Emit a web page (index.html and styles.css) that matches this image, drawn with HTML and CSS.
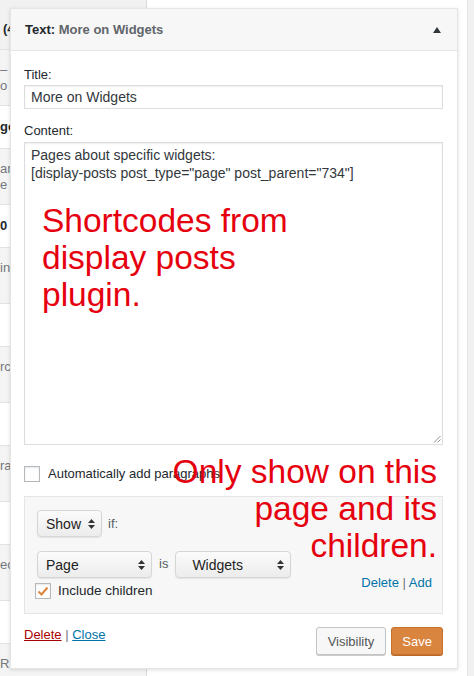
FILE: index.html
```html
<!DOCTYPE html>
<html lang="en">
<head>
    <meta charset="UTF-8">
    <meta name="viewport" content="width=device-width, initial-scale=1.0">
    <title>Widgets</title>
    <link rel="stylesheet" href="styles.css">
</head>
<body>
    <div class="screen">
        <!-- available widgets column (mostly hidden under the open widget) -->
        <div class="widget-list">
            <div class="wl-row wl-first"><b>(4</b></div>
            <div class="wl-row wl-desc">– |<br>o</div>
            <div class="wl-row wl-title"><b>ge</b></div>
            <div class="wl-row wl-desc">ar<br>e</div>
            <div class="wl-row wl-title"><b>0</b></div>
            <div class="wl-row wl-desc">in</div>
            <div class="wl-row wl-title"></div>
            <div class="wl-row wl-desc">rc</div>
            <div class="wl-row wl-title"></div>
            <div class="wl-row wl-desc">ra</div>
            <div class="wl-row wl-title"></div>
            <div class="wl-row wl-desc">ec</div>
            <div class="wl-row wl-title"></div>
            <div class="wl-row wl-desc">RS</div>
        </div>
        <div class="sidebar-area"></div>
        <div class="gutter"></div>

        <!-- the expanded text widget -->
        <div class="widget">
            <div class="widget-top">
                <h3>Text: <span class="in-title">More on Widgets</span></h3>
                <svg class="toggle" width="8" height="6" viewBox="0 0 8 6"><polygon points="4,0 8,6 0,6" fill="#32373c"/></svg>
            </div>

            <div class="widget-inside">
                <label class="field-label">Title:</label>
                <div class="text-input">More on Widgets</div>

                <label class="field-label content-label">Content:</label>
                <div class="content-box">
                    <p>Pages about specific widgets:</p>
                    <p>[display-posts post_type="page" post_parent="734"]</p>
                    <div class="note note-shortcodes">Shortcodes from<br>display posts<br>plugin.</div>
                    <svg class="grip" width="8" height="8" viewBox="0 0 8 8"><path d="M7.5 1 L1 7.5 M7.5 4.5 L4.5 7.5" stroke="#8c8f94" stroke-width="1"/></svg>
                </div>

                <div class="options">
                    <div class="check-row">
                        <span class="checkbox"></span>
                        <span>Automatically add paragraphs</span>
                    </div>

                    <div class="note note-visibility">Only show on this<br>page and its<br>children.</div>

                    <div class="visibility-box">
                        <div class="rule-row">
                            <div class="select select-show">
                                <span>Show</span>
                                <svg width="7" height="12" viewBox="0 0 7 12"><polygon points="3.5,1 7,5 0,5" fill="#333"/><polygon points="0,7 7,7 3.5,11" fill="#333"/></svg>
                            </div>
                            <span class="muted">if:</span>
                        </div>

                        <div class="rule">
                            <div class="rule-main">
                                <div class="rule-row">
                                    <div class="select select-page">
                                        <span>Page</span>
                                        <svg width="7" height="12" viewBox="0 0 7 12"><polygon points="3.5,1 7,5 0,5" fill="#333"/><polygon points="0,7 7,7 3.5,11" fill="#333"/></svg>
                                    </div>
                                    <span class="muted is">is</span>
                                    <div class="select select-widgets">
                                        <span>Widgets</span>
                                        <svg width="7" height="12" viewBox="0 0 7 12"><polygon points="3.5,1 7,5 0,5" fill="#333"/><polygon points="0,7 7,7 3.5,11" fill="#333"/></svg>
                                    </div>
                                </div>
                                <div class="check-row include-row">
                                    <span class="checkbox">
                                        <svg width="14" height="14" viewBox="0 0 14 14"><path d="M2.5 7.5 L5.5 10.5 L11.5 3.5" fill="none" stroke="#dc843b" stroke-width="2"/></svg>
                                    </span>
                                    <span>Include children</span>
                                </div>
                            </div>
                            <div class="rule-links">
                                <a href="#">Delete</a> <span class="sep">|</span> <a href="#">Add</a>
                            </div>
                        </div>
                    </div>
                </div>

                <div class="widget-control">
                    <div class="control-links">
                        <a href="#" class="link-delete">Delete</a> <span class="sep">|</span> <a href="#" class="link-close">Close</a>
                    </div>
                    <div class="control-buttons">
                        <button class="btn">Visibility</button>
                        <button class="btn btn-primary">Save</button>
                    </div>
                </div>
            </div>
        </div>
    </div>
</body>
</html>
```

FILE: styles.css
```css
:root {
    --text: #23282d;
    --text-muted: #555d66;
    --border: #e5e5e5;
    --bg: #f1f1f1;
    --link: #0073aa;
    --red: #e6000e;
}

* {
    margin: 0;
    padding: 0;
    box-sizing: border-box;
}

body {
    width: 474px;
    height: 676px;
    overflow: hidden;
    background-color: var(--bg);
    font-family: "Liberation Sans", Arial, sans-serif;
    color: var(--text);
}

.screen {
    position: relative;
    display: grid;
    grid-template-columns: 147px 321px 1fr;
    height: 676px;
}

/* left column */
.widget-list {
    border-right: 1px solid #dcdcdc;
    overflow: hidden;
}

.wl-row {
    border-bottom: 1px solid #e2e2e2;
    font-size: 13px;
    line-height: 16px;
    color: #72777c;
    white-space: nowrap;
}

.wl-row b {
    color: var(--text);
}

.wl-first {
    height: 50px;
    padding: 21px 0 0 3px;
    background-color: #f1f1f1;
}

.wl-desc {
    height: 56px;
    padding-top: 12px;
    background-color: #f4f4f4;
}

.wl-title {
    height: 43px;
    padding-top: 13px;
    background-color: #fff;
}

.sidebar-area {
    background-color: #fff;
    border-right: 1px solid var(--border);
}

/* open widget */
.widget {
    position: absolute;
    left: 10px;
    top: 8px;
    width: 448px;
    background-color: #fff;
    border: 1px solid var(--border);
    box-shadow: 0 1px 4px rgba(0, 0, 0, 0.13);
}

.widget-top {
    height: 42px;
    display: flex;
    align-items: center;
    justify-content: space-between;
    padding: 0 16px 0 14px;
    background-color: #f7f7f7;
    border-bottom: 1px solid var(--border);
}

.widget-top h3 {
    font-size: 13px;
    font-weight: 700;
    color: var(--text);
}

.in-title {
    color: #60656a;
}

.widget-inside {
    padding: 15px 14px 13px 13px;
}

.field-label {
    display: block;
    font-size: 13px;
    line-height: 18px;
    color: var(--text);
}

.content-label {
    margin-top: 13px;
}

.text-input {
    margin-top: 1px;
    height: 24px;
    padding: 0 6px;
    border: 1px solid #ddd;
    box-shadow: inset 0 1px 2px rgba(0, 0, 0, 0.07);
    font-size: 14px;
    line-height: 22px;
    color: #32373c;
}

.content-box {
    position: relative;
    margin-top: 2px;
    height: 303px;
    padding: 3px 6px;
    border: 1px solid #ddd;
    box-shadow: inset 0 1px 2px rgba(0, 0, 0, 0.07);
    font-size: 14px;
    line-height: 18px;
    color: #32373c;
}

/* red callouts */
.note {
    font-size: 33.5px;
    line-height: 37px;
    color: var(--red);
    white-space: nowrap;
}

.note-shortcodes {
    margin: 20px 0 0 11px;
}

.grip {
    position: absolute;
    right: 1px;
    bottom: 1px;
}

.options {
    position: relative;
    padding-top: 21px;
}

.note-visibility {
    position: absolute;
    top: 8px;
    right: 6px;
    text-align: right;
}

.check-row {
    display: flex;
    align-items: center;
    gap: 8px;
    height: 16px;
    font-size: 13px;
    line-height: 18px;
    color: var(--text);
}

.checkbox {
    width: 16px;
    height: 16px;
    display: flex;
    align-items: center;
    justify-content: center;
    border: 1px solid #b4b9be;
    background-color: #fff;
    box-shadow: inset 0 1px 2px rgba(0, 0, 0, 0.1);
}

.visibility-box {
    margin-top: 14px;
    padding: 13px 10px 14px 12px;
    border: 1px solid var(--border);
    background-color: #f7f7f7;
}

.rule-row {
    display: flex;
    align-items: center;
}

.select {
    height: 27px;
    display: flex;
    align-items: center;
    justify-content: space-between;
    padding: 0 6px 0 8px;
    border: 1px solid #d6d6d6;
    border-radius: 4px;
    background: linear-gradient(#fbfbfb, #ececec);
    box-shadow: 0 1px 1px rgba(0, 0, 0, 0.08);
    font-size: 14px;
    color: #222;
}

.select-show {
    width: 65px;
}

.select-page {
    width: 115px;
}

.select-widgets {
    width: 116px;
    padding-left: 16px;
}

.muted {
    font-size: 13px;
    color: var(--text-muted);
    margin-left: 6px;
}

.is {
    margin: -2px 7px 0 7px;
}

.rule {
    display: flex;
    justify-content: space-between;
    margin-top: 14px;
}

.include-row {
    margin: 5px 0 0 -2px;
    gap: 7px;
    font-size: 13.5px;
}

.rule-links {
    align-self: flex-end;
    margin-bottom: 7px;
    font-size: 13px;
    line-height: 18px;
}

.rule-links a {
    color: var(--link);
    text-decoration: none;
}

.sep {
    color: #72777c;
}

.widget-control {
    display: flex;
    justify-content: space-between;
    margin-top: 13px;
}

.control-links {
    margin-top: -1px;
    font-size: 13px;
    line-height: 18px;
}

.link-delete {
    color: #a00;
}

.link-close {
    color: var(--link);
}

.control-buttons {
    display: flex;
    gap: 5px;
}

.btn {
    height: 28px;
    padding: 0 11px;
    border: 1px solid #c4c4c4;
    border-radius: 3px;
    background-color: #f7f7f7;
    box-shadow: 0 1px 0 #ccc;
    font-family: inherit;
    font-size: 13px;
    color: #555;
}

.btn-primary {
    padding: 0 10px;
    background-color: #d9843f;
    border-color: #c7712d;
    box-shadow: 0 1px 0 #b9692a;
    color: #fff;
}
```
